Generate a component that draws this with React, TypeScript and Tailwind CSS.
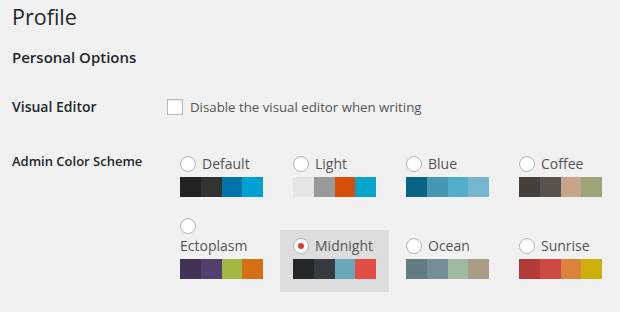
import React from "react";

type Scheme = { name: string; colors: string[]; selected?: boolean; wrap?: boolean };

const schemes: Scheme[] = [
  { name: "Default", colors: ["#222222", "#333333", "#0073aa", "#00a0d2"] },
  { name: "Light", colors: ["#e5e5e5", "#999999", "#d64e07", "#04a4cc"] },
  { name: "Blue", colors: ["#096484", "#4796b3", "#52accc", "#74b6ce"] },
  { name: "Coffee", colors: ["#46403c", "#59524c", "#c7a589", "#9ea476"] },
  { name: "Ectoplasm", colors: ["#413256", "#523f6d", "#a3b745", "#d46f15"], wrap: true },
  { name: "Midnight", colors: ["#25282b", "#363b3f", "#69a8bb", "#e14d43"], selected: true },
  { name: "Ocean", colors: ["#627c83", "#738e96", "#9ebaa0", "#aa9d88"] },
  { name: "Sunrise", colors: ["#b43c38", "#cf4944", "#dd823b", "#ccaf0b"] },
];

function Radio({ checked }: { checked?: boolean }) {
  return (
    <span className="flex h-[16px] w-[16px] shrink-0 items-center justify-center rounded-full border border-[#b4b9be] bg-white shadow-[inset_0_1px_2px_rgba(0,0,0,0.07)]">
      {checked && <span className="h-[6px] w-[6px] rounded-full bg-[#dd3d36]" />}
    </span>
  );
}

function Option({ s }: { s: Scheme }) {
  return (
    <div className={`w-[109px] px-[13px] pt-[5px] pb-[13px] ${s.selected ? "bg-[#dddddd]" : ""}`}>
      {s.wrap ? (
        <>
          <div className="flex h-[18px] items-center">
            <Radio checked={s.selected} />
          </div>
          <div className="h-[22px] text-[14px] leading-[22px] text-[#555555]">{s.name}</div>
        </>
      ) : (
        <div className="flex h-[22px] items-center">
          <span className="mr-[6px]">
            <Radio checked={s.selected} />
          </span>
          <span className="text-[14px] leading-[22px] text-[#555555]">{s.name}</span>
        </div>
      )}
      <div className="mt-[2px] flex h-[20px]">
        {s.colors.map((c, i) => (
          <div key={i} className="flex-1" style={{ backgroundColor: c }} />
        ))}
      </div>
    </div>
  );
}

export default function App() {
  return (
    <div
      className="h-[312px] w-[620px] overflow-hidden bg-[#f1f1f1] pl-[12px] text-[#23282d]"
      style={{ fontFamily: '"Open Sans", "Noto Sans", sans-serif' }}
    >
      <h1 className="pt-[2px] text-[21.5px] font-normal leading-[30px]">Profile</h1>
      <h2 className="mt-[15px] text-[15px] font-semibold leading-[20px]">Personal Options</h2>

      <div className="mt-[30px] flex">
        <div className="w-[155px] text-[14px] font-semibold leading-[20px]">Visual Editor</div>
        <div className="flex h-[20px] items-center">
          <span className="mr-[7px] h-[16px] w-[16px] border border-[#b4b9be] bg-white shadow-[inset_0_1px_2px_rgba(0,0,0,0.07)]" />
          <span className="text-[13.25px] leading-[20px] text-[#555555]">Disable the visual editor when writing</span>
        </div>
      </div>

      <div className="mt-[31px] flex">
        <div className="mt-[3px] w-[155px] text-[13px] font-semibold leading-[20px]">Admin Color Scheme</div>
        <div className="flex w-[448px] flex-wrap items-end gap-x-[4px] gap-y-[2px]">
          {schemes.map((s) => (
            <Option key={s.name} s={s} />
          ))}
        </div>
      </div>
    </div>
  );
}
